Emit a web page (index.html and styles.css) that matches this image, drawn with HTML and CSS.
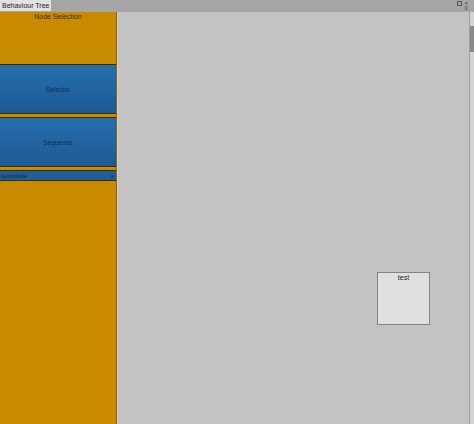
FILE: index.html
```html
<!DOCTYPE html>
<html>
<head>
<meta charset="utf-8">
<link rel="stylesheet" href="styles.css">
</head>
<body>
<div class="window">
  <div class="topbar">
    <div class="tab">Behaviour Tree</div>
    <div class="winctl">
      <div class="ctl-row"><span class="ctl-box"></span><span class="ctl-x">×</span></div>
      <div class="ctl-menu">≡</div>
    </div>
  </div>
  <div class="main">
    <div class="sidebar">
      <div class="title">Node Selection</div>
      <div class="btn">Selector</div>
      <div class="btn">Sequence</div>
      <div class="dropdown"><span>ActionNode</span><span class="arrow">▾</span></div>
    </div>
    <div class="canvas">
      <div class="node">test</div>
    </div>
    <div class="scrollbar"><div class="thumb"></div></div>
  </div>
</div>
</body>
</html>
```
FILE: styles.css
```css
html, body { margin: 0; padding: 0; }
body { width: 474px; height: 424px; overflow: hidden; font-family: "Liberation Sans", Arial, sans-serif; }
.window { display: flex; flex-direction: column; width: 474px; height: 424px; }
.topbar { height: 12px; background: #a6a6a6; display: flex; align-items: flex-start; justify-content: space-between; flex: none; }
.tab { background: #e2e2e2; height: 11px; font-size: 7px; line-height: 11px; color: #222; padding: 0 2px; white-space: nowrap; }
.winctl { width: 16px; margin-right: 6px; display: flex; flex-direction: column; align-items: flex-end; }
.ctl-row { display: flex; gap: 2px; align-items: center; height: 6px; }
.ctl-box { width: 3px; height: 3px; border: 1px solid #555; }
.ctl-x { font-size: 6px; line-height: 6px; color: #444; }
.ctl-menu { font-size: 6px; line-height: 5px; color: #444; }
.main { flex: 1; display: flex; }
.sidebar { width: 116px; background: #c88b00; border-right: 1px solid #8a6200; display: flex; flex-direction: column; flex: none; }
.title { height: 52px; font-size: 7px; color: #3a2a00; text-align: center; padding-top: 1px; box-sizing: border-box; }
.btn { height: 50px; margin-bottom: 3px; background: linear-gradient(#256eae, #1d5a92); border-top: 1px solid #3a2c00; border-bottom: 1px solid #3a2c00; box-sizing: border-box; display: flex; align-items: center; justify-content: center; font-size: 6.5px; color: #0e2c4c; }
.dropdown { height: 9px; background: #1f5f98; border-top: 1px solid #3a2c00; border-bottom: 1px solid #3a2c00; display: flex; justify-content: space-between; align-items: center; font-size: 5px; color: #0e2440; padding: 0 2px 0 1px; }
.arrow { font-size: 5px; }
.canvas { flex: 1; background: #c3c3c3; position: relative; border-left: 1px solid #d2d2d2; }
.node { position: absolute; left: 259px; top: 260px; width: 53px; height: 53px; box-sizing: border-box; background: #e0e0e0; border: 1px solid #848484; font-size: 7px; text-align: center; color: #222; line-height: 9px; }
.scrollbar { width: 4px; background: #d4d4d4; border-left: 1px solid #a0a0a0; flex: none; position: relative; }
.thumb { position: absolute; left: 0; right: 0; top: 14px; height: 26px; background: #8a8a8a; }
```
